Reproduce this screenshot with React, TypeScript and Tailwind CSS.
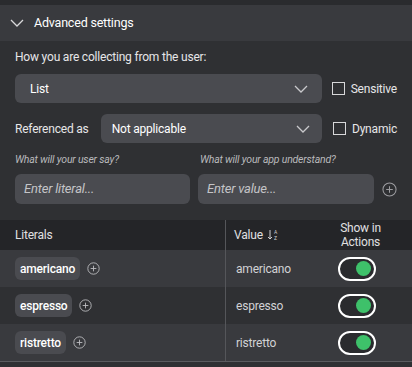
import React from 'react';

const Chevron = ({ className = '' }: { className?: string }) => (
  <svg width="14" height="8" viewBox="0 0 14 8" className={className} fill="none">
    <path d="M1 1l6 6 6-6" stroke="currentColor" strokeWidth="1.3" />
  </svg>
);

const PlusCircle = ({ size = 14 }: { size?: number }) => (
  <svg width={size} height={size} viewBox="0 0 16 16" fill="none">
    <circle cx="8" cy="8" r="7" stroke="currentColor" strokeWidth="1.1" />
    <path d="M8 4.5v7M4.5 8h7" stroke="currentColor" strokeWidth="1.1" />
  </svg>
);

const Toggle = () => (
  <div className="w-[38px] h-[24px] rounded-full border-2 border-white bg-[#2a2b2e] flex items-center justify-end pr-[3px]">
    <div className="w-[15px] h-[15px] rounded-full bg-[#3ec16a]" />
  </div>
);

const rows = ['americano', 'espresso', 'ristretto'];

export default function App() {
  return (
    <div
      className="w-[412px] h-[367px] bg-[#2f3033] text-white overflow-hidden tracking-[-0.2px]"
      style={{ fontFamily: 'Roboto, "Liberation Sans", sans-serif' }}
    >
      <div className="h-[5px] bg-[#2a2b2e]" />
      <div className="h-[36px] bg-[#393a3e] flex items-center pl-[10px] gap-[10px]">
        <Chevron className="text-[#d8d8da]" />
        <span className="text-[12.5px] text-white">Advanced settings</span>
      </div>

      <div className="px-[15px] pt-[9px]">
        <div className="text-[12px] text-[#e6e6e8] leading-[14px]">How you are collecting from the user:</div>

        <div className="flex items-center mt-[10px]">
          <div className="w-[308px] h-[29px] rounded-[6px] bg-[#4a4b50] flex items-center justify-between pl-[15px] pr-[14px]">
            <span className="text-[12px]">List</span>
            <Chevron className="text-[#c9c9cc]" />
          </div>
          <div className="flex items-center ml-[10px] gap-[6px]">
            <div className="w-[13px] h-[13px] border border-[#d8d8da]" />
            <span className="text-[12px] text-[#e6e6e8]">Sensitive</span>
          </div>
        </div>

        <div className="flex items-center mt-[11px]">
          <span className="text-[12px] text-[#e6e6e8] w-[86px] whitespace-nowrap">Referenced as</span>
          <div className="w-[222px] h-[29px] rounded-[6px] bg-[#4a4b50] flex items-center justify-between pl-[11px] pr-[12px]">
            <span className="text-[12px]">Not applicable</span>
            <Chevron className="text-[#c9c9cc]" />
          </div>
          <div className="flex items-center ml-[11px] gap-[6px]">
            <div className="w-[13px] h-[13px] border border-[#d8d8da]" />
            <span className="text-[12px] text-[#e6e6e8]">Dynamic</span>
          </div>
        </div>

        <div className="flex mt-[10px] text-[10.5px] italic text-[#b9b9bc] leading-[13px]">
          <span className="w-[185px]">What will your user say?</span>
          <span>What will your app understand?</span>
        </div>

        <div className="flex items-center mt-[8px]">
          <div className="w-[176px] h-[30px] rounded-[6px] bg-[#4a4b50] flex items-center pl-[9px]">
            <span className="text-[13px] italic text-[#c4c4c7]">Enter literal...</span>
          </div>
          <div className="w-[177px] h-[30px] rounded-[6px] bg-[#4a4b50] flex items-center pl-[9px] ml-[8px]">
            <span className="text-[13px] italic text-[#c4c4c7]">Enter value...</span>
          </div>
          <div className="ml-[8px] text-[#9d9da1]">
            <PlusCircle size={15} />
          </div>
        </div>
      </div>

      <div className="mt-[16px]">
        <div className="h-[30px] bg-[#242528] flex text-[12px] text-[#e0e0e2]">
          <div className="w-[226px] flex items-center pl-[15px] border-r border-[#55565a]">Literals</div>
          <div className="w-[88px] flex items-center pl-[8px] gap-[4px]">
            Value
            <span className="flex items-center text-[#cfcfd2]">
              <svg width="12" height="12" viewBox="0 0 12 12" fill="none">
                <path d="M3 1v9M1 8l2 2 2-2" stroke="currentColor" strokeWidth="1" />
                <text x="7" y="5" fontSize="5" fill="currentColor">A</text>
                <text x="7" y="11" fontSize="5" fill="currentColor">Z</text>
              </svg>
            </span>
          </div>
          <div className="flex-1 flex items-center justify-center text-center leading-[14px] pr-[5px]">
            Show in
            <br />
            Actions
          </div>
        </div>

        {rows.map((r, i) => (
          <div
            key={r}
            className={`h-[37px] flex ${i % 2 === 0 ? 'bg-[#393a3e]' : 'bg-[#2f3033]'}`}
          >
            <div className="w-[226px] flex items-center pl-[15px] gap-[7px] border-r border-[#55565a]">
              <span className="h-[23px] px-[5px] rounded-[6px] bg-[#4a4b50] flex items-center text-[12px] font-medium text-white">
                {r}
              </span>
              <span className="text-[#bdbdc0]">
                <PlusCircle size={13} />
              </span>
            </div>
            <div className="w-[112px] flex items-center pl-[10px] text-[12px] text-[#d2d2d5]">{r}</div>
            <div className="flex items-center">
              <Toggle />
            </div>
          </div>
        ))}
        <div className="h-[1px] bg-[#5a5b5f]" />
      </div>
    </div>
  );
}
